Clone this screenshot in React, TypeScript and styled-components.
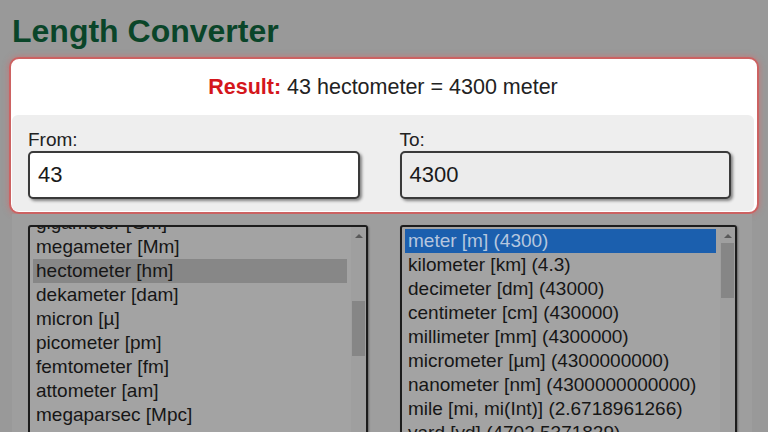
import styled, { createGlobalStyle } from "styled-components";

const GlobalStyle = createGlobalStyle`
  html, body {
    margin: 0;
    background: #999999;
    font-family: "Liberation Sans", Arial, sans-serif;
    overflow: hidden;
  }
`;

const fromUnits = [
  "gigameter [Gm]",
  "megameter [Mm]",
  "hectometer [hm]",
  "dekameter [dam]",
  "micron [µ]",
  "picometer [pm]",
  "femtometer [fm]",
  "attometer [am]",
  "megaparsec [Mpc]",
  "kiloparsec [kpc]",
  "parsec [pc]",
];

const toUnits = [
  "meter [m] (4300)",
  "kilometer [km] (4.3)",
  "decimeter [dm] (43000)",
  "centimeter [cm] (430000)",
  "millimeter [mm] (4300000)",
  "micrometer [µm] (4300000000)",
  "nanometer [nm] (4300000000000)",
  "mile [mi, mi(Int)] (2.6718961266)",
  "yard [yd] (4702.5371829)",
  "foot [ft] (14107.611549)",
];

const Title = styled.h1`
  margin: 0;
  padding: 13px 12px 0;
  font-size: 32px;
  line-height: 37px;
  font-weight: bold;
  color: #0a4529;
`;

const ResultCard = styled.section`
  margin: 7px 9px 0;
  padding: 0 3px 1px 1px;
  background: #ffffff;
  border: 2px solid #cc6262;
  border-radius: 10px;
  box-shadow: 0 0 6px rgba(230, 90, 90, 0.55);
`;

const ResultLine = styled.div`
  height: 56px;
  display: flex;
  align-items: center;
  justify-content: center;
  font-size: 21.5px;
  color: #222222;

  b {
    color: #d4161c;
    margin-right: 6px;
  }
`;

const Fields = styled.div`
  display: grid;
  grid-template-columns: 1fr 1fr;
  column-gap: 40px;
  padding: 14px 23px 12px 16px;
  background: #eeeeee;
  border-radius: 6px;
`;

const Field = styled.label`
  display: flex;
  flex-direction: column;
  font-size: 19px;
  line-height: 22px;
  color: #222222;
`;

const ValueBox = styled.div<{ $readOnly?: boolean }>`
  height: 48px;
  box-sizing: border-box;
  display: flex;
  align-items: center;
  padding-left: 8px;
  border: 2px solid #3a3a3a;
  border-radius: 5px;
  background: ${({ $readOnly }) => ($readOnly ? "#ececec" : "#ffffff")};
  box-shadow: 2px 2px 3px rgba(0, 0, 0, 0.45);
  font-size: 22px;
  color: #1a1a1a;
`;

const ListsPanel = styled.div`
  margin: 0 16px 0 12px;
  padding: 11px 15px 0 16px;
  background: #9e9e9e;
  border-radius: 0 0 6px 6px;
  display: grid;
  grid-template-columns: 340px 337px;
  column-gap: 32px;
`;

const ListBox = styled.div`
  height: 240px;
  display: flex;
  background: #a3a3a3;
  border: 2px solid #1c1c1c;
  border-radius: 3px;
  box-shadow: 1px 1px 2px rgba(0, 0, 0, 0.35);
  overflow: hidden;
`;

const Options = styled.div<{ $scroll: number }>`
  flex: 1;
  padding-top: 2px;
  margin-top: ${({ $scroll }) => -$scroll}px;
`;

const Option = styled.div<{ $state?: "selected" | "inactive" }>`
  height: 24px;
  line-height: 24px;
  margin: 0 4px 0 3px;
  padding-left: 3px;
  font-size: 19px;
  white-space: nowrap;
  color: ${({ $state }) => ($state === "selected" ? "#b6c7df" : "#161616")};
  background: ${({ $state }) =>
    $state === "selected"
      ? "#1b5fae"
      : $state === "inactive"
      ? "#878787"
      : "transparent"};
`;

const ScrollBar = styled.div`
  width: 15px;
  display: flex;
  flex-direction: column;
  align-items: center;
  background: #9f9f9f;
`;

const ArrowUp = styled.div`
  margin-top: 7px;
  width: 0;
  height: 0;
  border-left: 4px solid transparent;
  border-right: 4px solid transparent;
  border-bottom: 4px solid #5a5a5a;
`;

const Thumb = styled.div<{ $top: number; $size: number }>`
  width: 13px;
  margin-top: ${({ $top }) => $top}px;
  height: ${({ $size }) => $size}px;
  background: #868686;
`;

const App = () => {
  return (
    <>
      <GlobalStyle />
      <Title>Length Converter</Title>
      <ResultCard>
        <ResultLine>
          <b>Result:</b> 43 hectometer = 4300 meter
        </ResultLine>
        <Fields>
          <Field>
            From:
            <ValueBox>43</ValueBox>
          </Field>
          <Field>
            To:
            <ValueBox $readOnly>4300</ValueBox>
          </Field>
        </Fields>
      </ResultCard>
      <ListsPanel>
        <ListBox>
          <Options $scroll={18}>
            {fromUnits.map((unit) => (
              <Option
                key={unit}
                $state={unit.startsWith("hectometer") ? "inactive" : undefined}
              >
                {unit}
              </Option>
            ))}
          </Options>
          <ScrollBar>
            <ArrowUp />
            <Thumb $top={63} $size={55} />
          </ScrollBar>
        </ListBox>
        <ListBox>
          <Options $scroll={0}>
            {toUnits.map((unit, i) => (
              <Option key={unit} $state={i === 0 ? "selected" : undefined}>
                {unit}
              </Option>
            ))}
          </Options>
          <ScrollBar>
            <ArrowUp />
            <Thumb $top={5} $size={55} />
          </ScrollBar>
        </ListBox>
      </ListsPanel>
    </>
  );
};

export default App;
